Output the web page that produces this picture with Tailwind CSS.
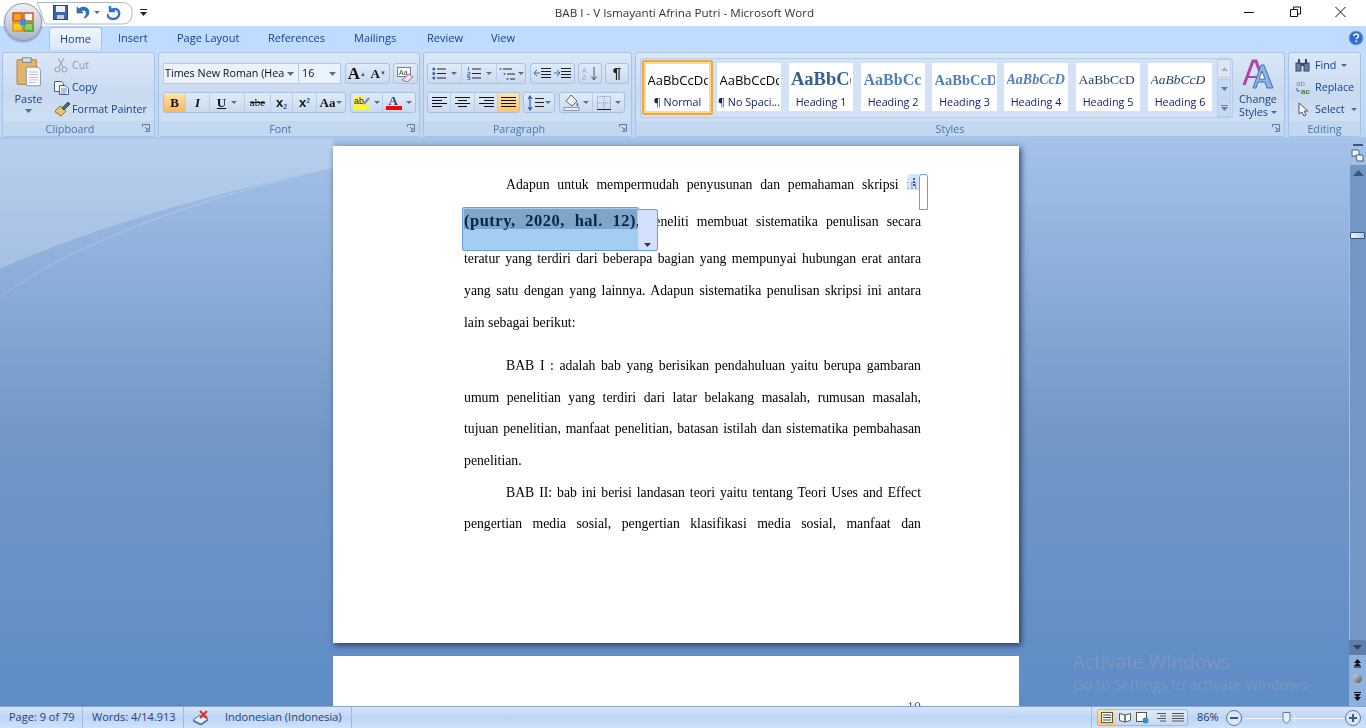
<!DOCTYPE html>
<html lang="id">
<head>
    <meta charset="UTF-8">
    <title>BAB I - V Ismayanti Afrina Putri - Microsoft Word</title>
    <script src="https://cdn.jsdelivr.net/npm/@tailwindcss/browser@4"></script>
</head>
<body class="m-0 overflow-hidden bg-white">
<div class="w-[1366px] h-[728px] flex flex-col overflow-hidden relative font-['Open_Sans','Noto_Sans',sans-serif] text-[10.750px] text-[#15428b]">

    <!-- title bar -->
    <div class="h-[26px] shrink-0 bg-white relative flex items-center justify-center">
        <span class="text-[11.650px] text-[#333] ml-[3px]">BAB I - V Ismayanti Afrina Putri - Microsoft Word</span>
        <div class="absolute right-0 top-0 h-[26px] flex items-center">
            <svg width="138" height="26" viewBox="0 0 138 26" fill="none" stroke="#111" stroke-width="1">
                <path d="M16 12.500h10"/>
                <path d="M62.500 9.500h7v7h-7zM65.500 9.500v-2.500h7v7h-3"/>
                <path d="M107.500 7l10 10M117.500 7l-10 10"/>
            </svg>
        </div>
    </div>

    <!-- tabs -->
    <div class="h-[24px] shrink-0 bg-[#bfdbff] flex items-end pl-[49px] relative text-[11px]">
        <div class="w-[53px] h-[23px] bg-gradient-to-b from-[#f0f6fe] to-[#dae7f8] border border-b-0 border-[#a4c1e6] rounded-t-[3px] flex items-center justify-center">Home</div>
        <div class="flex h-[23px] items-center">
            <span class="ml-[16px] w-[30px]">Insert</span>
            <span class="ml-[29px] w-[63px] whitespace-nowrap">Page Layout</span>
            <span class="ml-[28px] w-[57px]">References</span>
            <span class="ml-[29px] w-[44px]">Mailings</span>
            <span class="ml-[29px] w-[37px]">Review</span>
            <span class="ml-[27px] w-[25px]">View</span>
        </div>
        <svg class="absolute right-[2px] top-[4px]" width="16" height="16" viewBox="0 0 16 16"><circle cx="8" cy="8" r="7" fill="#2a6fd0" stroke="#7fa8e0"/><path d="M5.800 6.200c.2-1.500 1.200-2.200 2.400-2.200 1.300 0 2.300.8 2.300 2 0 1.700-2.200 1.700-2.200 3.300" fill="none" stroke="#fff" stroke-width="1.500"/><rect x="7.500" y="10.500" width="1.600" height="1.600" fill="#fff"/></svg>
    </div>

    <!-- ribbon -->
    <div class="h-[89px] shrink-0 bg-gradient-to-b from-[#c6dcf8] to-[#bdd6f4] border-b-2 border-[#a9c6e8] flex pl-[2px] pt-[2px] gap-[3px] relative">

        <!-- clipboard -->
        <div class="w-[153px] h-[85px] rounded-[3px] border border-[#a7c3e2] flex flex-col bg-gradient-to-b from-[#dbe7f7] via-[#c9daf0] to-[#d3e2f5]">
            <div class="h-[68px] flex relative">
                <div class="w-[51px] flex flex-col items-center pt-[4px]">
                    <svg width="27" height="30" viewBox="0 0 30 34"><rect x="2" y="3" width="22" height="28" rx="1" fill="#e3b56a" stroke="#a87b34"/><rect x="8" y="1" width="10" height="5" fill="#d8dde4" stroke="#6d7a8c"/><path d="M12.500 11.500h13l3 3v18h-16z" fill="#fff" stroke="#7c8ba0"/><path d="M15 17h11M15 20h11M15 23h11M15 26h11M15 29h8" stroke="#a9b4c4"/></svg>
                    <span class="mt-[5px] leading-[13px] text-[11px]">Paste</span>
                    <svg class="mt-[4px]" width="7" height="4"><path d="M0 0h7L3.500 4z" fill="#4b6a9a"/></svg>
                </div>
                <div class="flex flex-col pt-[1px]">
                    <div class="h-[22px] flex items-center gap-[4px]">
                        <svg width="14" height="16" viewBox="0 0 14 16" fill="none" stroke="#9a9ea6"><path d="M4 1l5 9M10 1L5 10"/><circle cx="3.500" cy="12.500" r="2.500"/><circle cx="10.500" cy="12.500" r="2.500"/></svg>
                        <span class="text-[#8d99ac]">Cut</span>
                    </div>
                    <div class="h-[22px] flex items-center gap-[3px]">
                        <svg width="15" height="15" viewBox="0 0 15 15"><path d="M.500 1.500h7l2 2v8h-9z" fill="#f4f7fb" stroke="#3f5f93"/><path d="M5.500 5.500h6l3 3v6h-9z" fill="#fff" stroke="#3f5f93"/><path d="M7 9h6M7 11h6M7 13h5" stroke="#6c86ad"/></svg>
                        <span>Copy</span>
                    </div>
                    <div class="h-[22px] flex items-center gap-[1px]">
                        <svg width="17" height="16" viewBox="0 0 17 16"><path d="M1 10l5-5 6 5-5 5-2-1-1-2-2 0z" fill="#e5c56d" stroke="#99782f"/><path d="M8 7l6-6 2 2-6 6z" fill="#56647f" stroke="#3c4a63"/></svg>
                        <span class="whitespace-nowrap">Format Painter</span>
                    </div>
                </div>
            </div>
            <div class="h-[15px] bg-[#c2d8f1] rounded-b-[3px] relative text-center leading-[16px] text-[#5272ab] pr-[17px]">Clipboard
                <svg class="absolute right-[4px] top-[3px]" width="8" height="8" viewBox="0 0 8 8" fill="none" stroke="#5d7ca8"><path d="M.500 3V.500h7v7H3"/><path d="M3 3l3 3M4 6h2V4"/></svg>
            </div>
        </div>

        <!-- font -->
        <div class="w-[262px] h-[85px] rounded-[3px] border border-[#a7c3e2] flex flex-col bg-gradient-to-b from-[#dbe7f7] via-[#c9daf0] to-[#d3e2f5]">
            <div class="h-[68px] pl-[4px] pt-[10px] flex flex-col gap-[8px]">
                <div class="flex h-[21px] items-center text-[#111]">
                    <div class="w-[136px] h-[21px] bg-[#eaf2fc] border border-[#b4cbe6] flex items-center justify-between pl-[1px] pr-[4px] whitespace-nowrap overflow-hidden text-[10.750px]">Times New Roman (Hea<svg class="shrink-0" width="7" height="4"><path d="M0 0h7L3.500 4z" fill="#56708f"/></svg></div>
                    <div class="w-[42px] h-[21px] bg-[#eaf2fc] border border-l-0 border-[#b4cbe6] flex items-center justify-between pl-[3px] pr-[4px]">16<svg width="7" height="4"><path d="M0 0h7L3.500 4z" fill="#56708f"/></svg></div>
                    <div class="ml-[4px] w-[45px] h-[21px] border border-[#a9c2e0] rounded-[3px] bg-gradient-to-b from-[#e1ebf8] to-[#c8daf0] flex items-center font-['Liberation_Serif'] font-bold">
                        <span class="w-[22px] text-center text-[17px] leading-none">A<sup class="text-[6px] text-[#2c5aa0]">▲</sup></span>
                        <span class="w-[22px] text-center text-[13px] leading-none">A<sup class="text-[6px] text-[#2c5aa0]">▼</sup></span>
                    </div>
                    <div class="ml-[3px] w-[25px] h-[21px] border border-[#a9c2e0] rounded-[3px] bg-gradient-to-b from-[#e1ebf8] to-[#c8daf0] flex items-center justify-center">
                        <svg width="19" height="16" viewBox="0 0 19 16"><rect x="1.500" y="1.500" width="13" height="9" fill="#fff" stroke="#6d7f99"/><path d="M6 14l7-6 4 3-6 5z" fill="#f4e0e4" stroke="#8a7f90"/><text x="3" y="9" font-size="7" font-family="Liberation Sans" fill="#333">Aa</text></svg>
                    </div>
                </div>
                <div class="flex h-[21px] items-center text-[#111]">
                    <div class="w-[183px] h-[21px] border border-[#a9c2e0] rounded-[3px] bg-gradient-to-b from-[#e1ebf8] to-[#c8daf0] flex items-center font-['Liberation_Serif'] divide-x divide-[#b7cde8]">
                        <span class="w-[22px] h-full bg-gradient-to-b from-[#fde6a8] to-[#fbb45e] flex items-center justify-center font-bold text-[13px] rounded-l-[2px]">B</span>
                        <span class="w-[24px] text-center italic font-bold text-[13px]">I</span>
                        <span class="w-[35px] flex items-center justify-center gap-[5px] font-bold text-[13px] underline">U<svg width="6" height="3"><path d="M0 0h6L3 3z" fill="#56708f"/></svg></span>
                        <span class="w-[26px] text-center text-[11px] line-through">abe</span>
                        <span class="w-[22px] text-center font-bold text-[13px] font-['Liberation_Sans']">x<sub class="text-[7px] text-[#2c5aa0]">2</sub></span>
                        <span class="w-[24px] text-center font-bold text-[13px] font-['Liberation_Sans']">x<sup class="text-[7px] text-[#2c5aa0]">2</sup></span>
                        <span class="flex-1 flex items-center justify-center gap-[1px] text-[13px] font-bold">Aa<svg width="6" height="3"><path d="M0 0h6L3 3z" fill="#56708f"/></svg></span>
                    </div>
                    <div class="ml-[4px] w-[66px] h-[21px] border border-[#a9c2e0] rounded-[3px] bg-gradient-to-b from-[#e1ebf8] to-[#c8daf0] flex items-center">
                        <div class="w-[32px] flex items-center justify-center gap-[3px] border-r border-[#b7cde8] h-full">
                            <svg width="18" height="17" viewBox="0 0 18 17"><rect x="1" y="2" width="10" height="9" fill="#fff27a"/><text x="1" y="10" font-size="9" font-family="Liberation Sans" fill="#111">ab</text><path d="M11 10l5-6" stroke="#7c8ba0" stroke-width="2"/><rect x="1" y="12" width="16" height="4" fill="#ffff00"/></svg>
                            <svg width="6" height="3"><path d="M0 0h6L3 3z" fill="#56708f"/></svg>
                        </div>
                        <div class="flex-1 flex items-center justify-center gap-[3px]">
                            <svg width="17" height="17" viewBox="0 0 17 17"><text x="2.500" y="11" font-size="13" font-weight="bold" font-family="Liberation Serif" fill="#22407c">A</text><rect x="0" y="12" width="16" height="4" fill="#f00"/></svg>
                            <svg width="6" height="3"><path d="M0 0h6L3 3z" fill="#56708f"/></svg>
                        </div>
                    </div>
                </div>
            </div>
            <div class="h-[15px] bg-[#c2d8f1] rounded-b-[3px] relative text-center leading-[16px] text-[#5272ab] pr-[17px]">Font
                <svg class="absolute right-[4px] top-[3px]" width="8" height="8" viewBox="0 0 8 8" fill="none" stroke="#5d7ca8"><path d="M.500 3V.500h7v7H3"/><path d="M3 3l3 3M4 6h2V4"/></svg>
            </div>
        </div>

        <!-- paragraph -->
        <div class="w-[209px] h-[85px] rounded-[3px] border border-[#a7c3e2] flex flex-col bg-gradient-to-b from-[#dbe7f7] via-[#c9daf0] to-[#d3e2f5]">
            <div class="h-[68px] pl-[3px] pt-[10px] flex flex-col gap-[8px]">
                <div class="flex h-[21px] items-center">
                    <div class="w-[99px] h-[21px] border border-[#a9c2e0] rounded-[3px] bg-gradient-to-b from-[#e1ebf8] to-[#c8daf0] flex items-center divide-x divide-[#b7cde8]">
                        <span class="w-[34px] h-full flex items-center justify-center gap-[4px]">
                            <svg width="15" height="13" viewBox="0 0 15 13"><path d="M5 2h9M5 6.500h9M5 11h9" stroke="#222"/><circle cx="1.800" cy="2" r="1.500" fill="#3a66a8"/><circle cx="1.800" cy="6.500" r="1.500" fill="#3a66a8"/><circle cx="1.800" cy="11" r="1.500" fill="#3a66a8"/></svg>
                            <svg width="6" height="3"><path d="M0 0h6L3 3z" fill="#56708f"/></svg>
                        </span>
                        <span class="w-[35px] h-full flex items-center justify-center gap-[4px]">
                            <svg width="15" height="13" viewBox="0 0 15 13"><path d="M5 2h9M5 6.500h9M5 11h9" stroke="#222"/><path d="M1.500 0v4M.500 5.500h2.500v2H.500v2h2.500M.500 10.500h2.500v2h-2.500" fill="none" stroke="#3a66a8" stroke-width=".8"/></svg>
                            <svg width="6" height="3"><path d="M0 0h6L3 3z" fill="#56708f"/></svg>
                        </span>
                        <span class="flex-1 h-full flex items-center justify-center gap-[2px]">
                            <svg width="17" height="14" viewBox="0 0 17 14"><path d="M4 2h9M8 7h8M11 12h5" stroke="#222"/><circle cx="1.500" cy="2" r="1" fill="#3a66a8"/><circle cx="5.500" cy="7" r="1" fill="#3a66a8"/><circle cx="8.500" cy="12" r="1" fill="#3a66a8"/></svg>
                            <svg width="6" height="3"><path d="M0 0h6L3 3z" fill="#56708f"/></svg>
                        </span>
                    </div>
                    <div class="ml-[4px] w-[45px] h-[21px] border border-[#a9c2e0] rounded-[3px] bg-gradient-to-b from-[#e1ebf8] to-[#c8daf0] flex items-center justify-around px-[1px]">
                        <svg width="17" height="13" viewBox="0 0 17 13"><path d="M7 1.500h10M7 4.500h10M7 7.500h10M7 10.500h10" stroke="#222" stroke-width="1.200"/><path d="M0 6h6M3 3L0 6l3 3" fill="none" stroke="#3a66a8"/></svg>
                        <svg width="17" height="13" viewBox="0 0 17 13"><path d="M7 1.500h10M7 4.500h10M7 7.500h10M7 10.500h10" stroke="#222" stroke-width="1.200"/><path d="M0 6h6M3 3l3 3-3 3" fill="none" stroke="#3a66a8"/></svg>
                    </div>
                    <div class="ml-[3px] w-[24px] h-[21px] border border-[#a9c2e0] rounded-[3px] bg-gradient-to-b from-[#e1ebf8] to-[#c8daf0] flex items-center justify-center">
                        <svg width="17" height="15" viewBox="0 0 17 15"><text x="0" y="7" font-size="7" font-family="Liberation Sans" fill="#9aa8bd">A</text><text x="0" y="14" font-size="7" font-family="Liberation Sans" fill="#9aa8bd">Z</text><path d="M12 1v12M9.500 10.500L12 14l2.500-3.500" fill="none" stroke="#47556b"/></svg>
                    </div>
                    <div class="ml-[3px] w-[24px] h-[21px] border border-[#a9c2e0] rounded-[3px] bg-gradient-to-b from-[#e1ebf8] to-[#c8daf0] flex items-center justify-center font-bold text-[15px] text-[#222] font-['Liberation_Sans']">¶</div>
                </div>
                <div class="flex h-[21px] items-center">
                    <div class="w-[93px] h-[21px] border border-[#a9c2e0] rounded-[3px] bg-gradient-to-b from-[#e1ebf8] to-[#c8daf0] flex items-center divide-x divide-[#b7cde8]">
                        <span class="w-[23px] h-full flex items-center justify-center"><svg width="15" height="13" viewBox="0 0 15 13" stroke="#111"><path d="M0 1.500h15M0 4.500h10M0 7.500h15M0 10.500h10"/></svg></span>
                        <span class="w-[24px] h-full flex items-center justify-center"><svg width="15" height="13" viewBox="0 0 15 13" stroke="#111"><path d="M0 1.500h15M3 4.500h9M0 7.500h15M3 10.500h9"/></svg></span>
                        <span class="w-[23px] h-full flex items-center justify-center"><svg width="15" height="13" viewBox="0 0 15 13" stroke="#111"><path d="M0 1.500h15M5 4.500h10M0 7.500h15M5 10.500h10"/></svg></span>
                        <span class="flex-1 h-full bg-gradient-to-b from-[#fde6a8] to-[#fbc56e] flex items-center justify-center rounded-r-[2px]"><svg width="15" height="13" viewBox="0 0 15 13" stroke="#111"><path d="M0 1.500h15M0 4.500h15M0 7.500h15M0 10.500h15"/></svg></span>
                    </div>
                    <div class="ml-[3px] w-[32px] h-[21px] border border-[#a9c2e0] rounded-[3px] bg-gradient-to-b from-[#e1ebf8] to-[#c8daf0] flex items-center justify-center gap-[1px]">
                        <svg width="17" height="16" viewBox="0 0 17 16"><path d="M3 1v14M1 4l2-3 2 3M1 12l2 3 2-3" fill="none" stroke="#2f62ad" stroke-width="1.200"/><path d="M8 3.500h9M8 7.500h9M8 11.500h9" stroke="#222"/></svg>
                        <svg width="6" height="3"><path d="M0 0h6L3 3z" fill="#56708f"/></svg>
                    </div>
                    <div class="ml-[4px] w-[66px] h-[21px] border border-[#a9c2e0] rounded-[3px] bg-gradient-to-b from-[#e1ebf8] to-[#c8daf0] flex items-center divide-x divide-[#b7cde8]">
                        <span class="w-[33px] h-full flex items-center justify-center gap-[3px]">
                            <svg width="17" height="17" viewBox="0 0 17 17"><path d="M8 1l6 6-5 5-6-5z" fill="#f5f7fa" stroke="#52627c"/><path d="M14 8c1 2 2 3 1 4s-2-1-1-4z" fill="#3a66a8"/><rect x="1" y="13.500" width="15" height="3" fill="#e8eef6" stroke="#8c99ab"/></svg>
                            <svg width="6" height="3"><path d="M0 0h6L3 3z" fill="#56708f"/></svg>
                        </span>
                        <span class="flex-1 h-full flex items-center justify-center gap-[4px]">
                            <svg width="14" height="14" viewBox="0 0 14 14" stroke="#8a96a8" stroke-dasharray="1 1" fill="none"><path d="M.500.500h13v13H.500zM7 0v14M0 7h14"/><path d="M0 13.500h14" stroke="#222" stroke-dasharray="none"/></svg>
                            <svg width="6" height="3"><path d="M0 0h6L3 3z" fill="#56708f"/></svg>
                        </span>
                    </div>
                </div>
            </div>
            <div class="h-[15px] bg-[#c2d8f1] rounded-b-[3px] relative text-center leading-[16px] text-[#5272ab] pr-[17px]">Paragraph
                <svg class="absolute right-[4px] top-[3px]" width="8" height="8" viewBox="0 0 8 8" fill="none" stroke="#5d7ca8"><path d="M.500 3V.500h7v7H3"/><path d="M3 3l3 3M4 6h2V4"/></svg>
            </div>
        </div>

        <!-- styles -->
        <div class="w-[650px] h-[85px] rounded-[3px] border border-[#a7c3e2] flex flex-col bg-gradient-to-b from-[#dbe7f7] via-[#c9daf0] to-[#d3e2f5]">
            <div class="h-[68px] flex pl-[4px] pt-[5px]">
                <div class="w-[593px] h-[60px] border border-[#b5cde9] rounded-[2px] bg-[#d3e2f6] flex">
                    <div class="flex items-start pl-[1px] pt-[1px] text-[#111]">
                        <div class="w-[71px] h-[55px] border-2 border-[#e9a948] rounded-[2px] bg-white flex flex-col items-center overflow-hidden shadow-[inset_0_0_0_2px_#fdd98a]">
                            <span class="mt-[8px] h-[20px] w-[60px] overflow-hidden whitespace-nowrap text-[13px] leading-[20px] text-black">AaBbCcDd</span>
                            <span class="mt-[4px] text-[#15206b]">¶ Normal</span>
                        </div>
                        <div class="ml-[4px] mt-[3px] w-[64px] h-[48px] bg-white flex flex-col items-center overflow-hidden">
                            <span class="mt-[7px] h-[20px] w-[59px] overflow-hidden whitespace-nowrap text-[13px] leading-[20px] text-black">AaBbCcDd</span>
                            <span class="mt-[4px] text-[#15206b] whitespace-nowrap">¶ No Spaci...</span>
                        </div>
                        <div class="ml-[8px] mt-[3px] w-[64px] h-[48px] bg-white flex flex-col items-center overflow-hidden">
                            <span class="mt-[5px] h-[22px] w-[60px] overflow-hidden whitespace-nowrap text-[18.500px] leading-[22px] font-bold text-[#365f91] font-['Liberation_Serif']">AaBbCc</span>
                            <span class="mt-[4px] text-[#15206b]">Heading 1</span>
                        </div>
                        <div class="ml-[8px] mt-[3px] w-[64px] h-[48px] bg-white flex flex-col items-center overflow-hidden">
                            <span class="mt-[6px] h-[21px] w-[59px] overflow-hidden whitespace-nowrap text-[16px] leading-[21px] font-bold text-[#4f81bd] font-['Liberation_Serif']">AaBbCc</span>
                            <span class="mt-[4px] text-[#15206b]">Heading 2</span>
                        </div>
                        <div class="ml-[7px] mt-[3px] w-[65px] h-[48px] bg-white flex flex-col items-center overflow-hidden">
                            <span class="mt-[7px] h-[20px] w-[60px] overflow-hidden whitespace-nowrap text-[14.500px] leading-[20px] font-bold text-[#4f81bd] font-['Liberation_Serif']">AaBbCcD</span>
                            <span class="mt-[4px] text-[#15206b]">Heading 3</span>
                        </div>
                        <div class="ml-[7px] mt-[3px] w-[64px] h-[48px] bg-white flex flex-col items-center overflow-hidden">
                            <span class="mt-[7px] h-[20px] w-[59px] overflow-hidden whitespace-nowrap text-[14px] leading-[20px] font-bold italic text-[#4f81bd] font-['Liberation_Serif']">AaBbCcD</span>
                            <span class="mt-[4px] text-[#15206b]">Heading 4</span>
                        </div>
                        <div class="ml-[8px] mt-[3px] w-[64px] h-[48px] bg-white flex flex-col items-center overflow-hidden">
                            <span class="mt-[7px] h-[20px] w-[59px] overflow-hidden whitespace-nowrap text-[13.500px] leading-[20px] text-[#243f60] font-['Liberation_Serif']">AaBbCcD</span>
                            <span class="mt-[4px] text-[#15206b]">Heading 5</span>
                        </div>
                        <div class="ml-[8px] mt-[3px] w-[64px] h-[48px] bg-white flex flex-col items-center overflow-hidden">
                            <span class="mt-[7px] h-[20px] w-[59px] overflow-hidden whitespace-nowrap text-[13.500px] leading-[20px] italic text-[#243f60] font-['Liberation_Serif']">AaBbCcD</span>
                            <span class="mt-[4px] text-[#15206b]">Heading 6</span>
                        </div>
                    </div>
                    <div class="ml-[5px] w-[14px] flex flex-col gap-[1px]">
                        <div class="h-[19px] bg-[#dde7f4] border border-[#bccfe6] rounded-t-[2px] flex items-center justify-center"><svg width="7" height="4"><path d="M0 4h7L3.500 0z" fill="#a5b3c6"/></svg></div>
                        <div class="h-[19px] bg-[#c8daf2] border border-[#b5cde9] flex items-center justify-center"><svg width="7" height="4"><path d="M0 0h7L3.500 4z" fill="#5b7eae"/></svg></div>
                        <div class="h-[18px] bg-[#c8daf2] border border-[#b5cde9] rounded-b-[2px] flex flex-col items-center justify-center gap-[1px]"><span class="w-[7px] h-[1px] bg-[#5b7eae]"></span><svg width="7" height="4"><path d="M0 0h7L3.500 4z" fill="#5b7eae"/></svg></div>
                    </div>
                </div>
                <div class="w-[50px] flex flex-col items-center">
                    <svg class="mt-[1px]" width="32" height="31" viewBox="0 0 32 31"><path d="M2 26L11 2h3l5 14" fill="none" stroke="#b044a8" stroke-width="3"/><path d="M6 18h10" stroke="#b044a8" stroke-width="2"/><path d="M11 29L19 6h3l9 23h-6l-2-6h-7l-2 6z" fill="#8fb2e4" stroke="#3f6fb5"/><path d="M17 20h6l-3-8z" fill="#fff" stroke="#3f6fb5"/></svg>
                    <span class="mt-[3px] leading-[13px]">Change</span>
                    <span class="leading-[13px] flex items-center gap-[3px]">Styles<svg width="6" height="3"><path d="M0 0h6L3 3z" fill="#4b6a9a"/></svg></span>
                </div>
            </div>
            <div class="h-[15px] bg-[#c2d8f1] rounded-b-[3px] relative text-center leading-[16px] text-[#5272ab] pr-[20px]">Styles
                <svg class="absolute right-[4px] top-[3px]" width="8" height="8" viewBox="0 0 8 8" fill="none" stroke="#5d7ca8"><path d="M.500 3V.500h7v7H3"/><path d="M3 3l3 3M4 6h2V4"/></svg>
            </div>
        </div>

        <!-- editing -->
        <div class="w-[73px] h-[85px] rounded-[3px] border border-[#a7c3e2] flex flex-col bg-gradient-to-b from-[#dbe7f7] via-[#c9daf0] to-[#d3e2f5]">
            <div class="h-[68px] pl-[6px] pt-[1px] flex flex-col">
                <div class="h-[22px] flex items-center gap-[5px]">
                    <svg width="15" height="14" viewBox="0 0 15 14"><rect x="1" y="5" width="5" height="8" fill="#6a7f9f" stroke="#34486b"/><rect x="9" y="5" width="5" height="8" fill="#6a7f9f" stroke="#34486b"/><rect x="3" y="1" width="2" height="5" fill="#34486b"/><rect x="10" y="1" width="2" height="5" fill="#34486b"/><rect x="6" y="5" width="3" height="3" fill="#34486b"/></svg>
                    <span>Find</span><svg width="6" height="3"><path d="M0 0h6L3 3z" fill="#4b6a9a"/></svg>
                </div>
                <div class="h-[22px] flex items-center gap-[4px]">
                    <svg width="16" height="16" viewBox="0 0 16 16"><text x="1" y="7" font-size="8" font-family="Liberation Sans" fill="#8a8f96">ab</text><text x="6" y="15" font-size="8" font-weight="bold" font-family="Liberation Sans" fill="#2f8a3c">ac</text><path d="M2 9v3h3" fill="none" stroke="#3a66a8"/></svg>
                    <span>Replace</span>
                </div>
                <div class="h-[22px] flex items-center gap-[6px] pl-[3px]">
                    <svg width="11" height="15" viewBox="0 0 11 15"><path d="M1 1v11l3-2 2 4 2-1-2-4h4z" fill="#fff" stroke="#45566f"/></svg>
                    <span>Select</span><svg width="6" height="3"><path d="M0 0h6L3 3z" fill="#4b6a9a"/></svg>
                </div>
            </div>
            <div class="h-[15px] bg-[#c2d8f1] rounded-b-[3px] text-center leading-[16px] text-[#5272ab]">Editing</div>
        </div>
    </div>

    <!-- document area -->
    <div class="flex-1 flex min-h-0 bg-gradient-to-b from-[#a4c2ea] via-[#7297c6] via-52% to-[#5e8cc7] relative overflow-hidden">
        <!-- swoosh behind the pages -->
        <svg class="absolute left-0 top-0" width="333" height="160" viewBox="0 0 333 160"><path d="M0 0h333v28C210 56 100 85 0 130z" fill="#fff" fill-opacity=".22"/><path d="M0 158C80 100 200 60 333 28" fill="none" stroke="#fff" stroke-opacity=".22"/></svg>

        <div class="flex-1 flex flex-col items-center pt-[7px] gap-[13px] relative">
            <div class="w-[686px] h-[497px] shrink-0 bg-white shadow-[2px_2px_6px_rgba(20,35,70,.8)] mr-[-3px] pl-[131px] pr-[98px] font-['Liberation_Serif'] text-[13.760px] text-black relative">
                <div class="h-[43px] pt-[30px] leading-[18px]"><p class="indent-[42px] text-justify [text-align-last:justify]">Adapun untuk mempermudah penyusunan dan pemahaman skripsi ini</p></div>
                <div class="h-[47px] pt-[23px] leading-[18px]"><p class="text-justify [text-align-last:justify]"><span class="inline-block w-[172px] font-bold text-[16.500px] tracking-[.5px] leading-[18px] text-[#0e3a63] [text-align-last:justify]">(putry, 2020, hal. 12)</span>, peneliti membuat sistematika penulisan secara</p></div>
                <div class="h-[32px] pt-[14px] leading-[18px]"><p class="text-justify [text-align-last:justify]">teratur yang terdiri dari beberapa bagian yang mempunyai hubungan erat antara</p></div>
                <div class="h-[32px] pt-[14px] leading-[18px]"><p class="text-justify [text-align-last:justify]">yang satu dengan yang lainnya. Adapun sistematika penulisan skripsi ini antara</p></div>
                <div class="h-[32px] pt-[14px] leading-[18px]"><p>lain sebagai berikut:</p></div>
                <div class="h-[43px] pt-[25px] leading-[18px]"><p class="indent-[42px] text-justify [text-align-last:justify]">BAB I : adalah bab yang berisikan pendahuluan yaitu berupa gambaran</p></div>
                <div class="h-[32px] pt-[14px] leading-[18px]"><p class="text-justify [text-align-last:justify]">umum penelitian yang terdiri dari latar belakang masalah, rumusan masalah,</p></div>
                <div class="h-[31px] pt-[13px] leading-[18px]"><p class="text-justify [text-align-last:justify]">tujuan penelitian, manfaat penelitian, batasan istilah dan sistematika pembahasan</p></div>
                <div class="h-[32px] pt-[14px] leading-[18px]"><p>penelitian.</p></div>
                <div class="h-[32px] pt-[14px] leading-[18px]"><p class="indent-[42px] text-justify [text-align-last:justify]">BAB II: bab ini berisi landasan teori yaitu tentang Teori Uses and Effect</p></div>
                <div class="h-[31px] pt-[13px] leading-[18px]"><p class="text-justify [text-align-last:justify]">pengertian media sosial, pengertian klasifikasi media sosial, manfaat dan</p></div>

                <!-- content control over the citation -->
                <div class="absolute left-[129px] top-[61px] w-[177px] h-[44px] border border-[#6b9ae6] rounded-[2px] bg-[#a3cdf1] mix-blend-multiply">
                    <div class="h-[20px] mt-[1px] ml-[1px] mr-[1px] bg-[#7fa6c8]"></div>
                </div>
                <div class="absolute left-[305px] top-[63px] w-[20px] h-[42px] border border-l-0 border-[#6b9ae6] rounded-r-[3px] bg-[#d3e0fd] flex items-end justify-center pb-[3px]"><svg width="7" height="4"><path d="M0 0h7L3.500 4z" fill="#1d3a78"/></svg></div>
                <div class="absolute left-[575px] top-[28px] w-[11px] h-[16px] bg-[#c8d9fb]/70 border border-[#d6e2fb] flex flex-col items-center justify-center gap-[1px] rounded-l-[2px]"><span class="w-[2px] h-[2px] bg-[#44628f]"></span><span class="w-[2px] h-[2px] bg-[#44628f]"></span><span class="w-[2px] h-[2px] bg-[#44628f]"></span></div>
                <div class="absolute left-[586px] top-[28px] w-[9px] h-[36px] bg-white border border-[#6b9ae6] rounded-t-[3px]"></div>
            </div>
            <div class="w-[686px] h-[100px] shrink-0 bg-white mr-[-3px] font-['Liberation_Serif'] text-[13.760px] text-[#555] relative">
                <span class="absolute left-[574px] top-[42px]">10</span>
            </div>
        </div>

        <!-- vertical scrollbar -->
        <div class="w-[17px] shrink-0 flex flex-col items-center relative">
            <div class="h-[7px] w-full flex items-end justify-center"><span class="w-[10px] h-[2px] bg-[#3e5580]"></span></div>
            <svg class="mt-[3px]" width="13" height="13" viewBox="0 0 13 13"><path d="M1 1h6l1 1v5H1z" fill="#f2f5fb" stroke="#4a5d80"/><path d="M5 6h6l1 1v5H6z" fill="#f2f5fb" stroke="#4a5d80"/></svg>
            <div class="mt-[3px] flex-1 w-full bg-[#7397c4] border-l border-[#9fbde5] relative">
                <svg class="mx-auto mt-[5px]" width="11" height="6"><path d="M0 6h11L5.500 0z" fill="#3e5580"/></svg>
                <div class="absolute left-0 top-[67px] w-[15px] h-[7px] rounded-[1px] border border-[#3e5580] bg-gradient-to-r from-[#f2f5fb] to-[#b9c8de]"></div>
            </div>
            <div class="absolute bottom-0 left-0 right-0 h-[66px] bg-[#8eb1e0] flex flex-col items-center">
                <div class="h-[15px] w-full bg-[#5f7dab] flex items-center justify-center"><svg width="9" height="5"><path d="M0 0h9L4.500 5z" fill="#2d4067"/></svg></div>
                <svg class="mt-[4px]" width="9" height="9" viewBox="0 0 9 9"><path d="M4.500 0L8 4H1zM4.500 3.500L8 7H1z" fill="#111"/><path d="M1 8h7" stroke="#111"/></svg>
                <span class="mt-[6px] w-[9px] h-[9px] rounded-full bg-gradient-to-br from-[#ddd] to-[#555]"></span>
                <svg class="mt-[9px]" width="9" height="9" viewBox="0 0 9 9"><path d="M1 .500h7" stroke="#111"/><path d="M4.500 9L8 5H1zM4.500 5.500L8 2H1z" fill="#111"/></svg>
            </div>
        </div>

        <!-- activation watermark -->
        <div class="absolute left-[1073px] top-[510px] text-[#7b97bd] font-['Open_Sans'] pointer-events-none">
            <div class="text-[19.200px] leading-[26px]">Activate Windows</div>
            <div class="text-[14.500px] leading-[20px]">Go to Settings to activate Windows.</div>
        </div>
    </div>

    <!-- status bar -->
    <div class="h-[22px] shrink-0 border-t border-[#83a6d6] bg-gradient-to-b from-[#d6e6fa] via-[#bcd5f5] to-[#cfe2fa] flex items-center text-[#2a4078] relative text-[11px]">
        <span class="w-[83px] pl-[9px] whitespace-nowrap border-r border-[#9dbbe0] h-full flex items-center">Page: 9 of 79</span>
        <span class="w-[101px] pl-[9px] whitespace-nowrap border-r border-[#9dbbe0] h-full flex items-center">Words: 4/14.913</span>
        <span class="w-[34px] flex justify-center"><svg width="18" height="15" viewBox="0 0 18 15"><path d="M1 10l7-5 8 4-7 5z" fill="#e8eef8" stroke="#4d6da3"/><path d="M1 11l8 4 7-5" fill="none" stroke="#2f5aa0"/><path d="M8 1l7 7M15 1L8 8" stroke="#d8322a" stroke-width="2"/></svg></span>
        <span class="w-[134px] pl-[7px] whitespace-nowrap border-r border-[#9dbbe0] h-full flex items-center">Indonesian (Indonesia)</span>
        <div class="absolute right-0 top-0 h-full w-[275px] border-l border-[#9dbbe0] flex items-center pl-[5px]">
            <div class="w-[91px] h-[17px] border border-[#9db8dc] rounded-[2px] flex items-center bg-gradient-to-b from-[#dfeafa] to-[#c5d9f4]">
                <span class="w-[18px] h-full bg-gradient-to-b from-[#fde6a8] to-[#fbc56e] flex items-center justify-center"><svg width="12" height="11" viewBox="0 0 12 11"><rect x=".500" y=".500" width="11" height="10" fill="#fff" stroke="#555"/><path d="M2 3h8M2 5.500h8M2 8h8" stroke="#444"/></svg></span>
                <span class="w-[18px] flex justify-center"><svg width="12" height="11" viewBox="0 0 12 11" fill="#fff" stroke="#555"><path d="M.500 1.500L6 3v7L.500 8.500zM11.500 1.500L6 3v7l5.500-1.500z"/></svg></span>
                <span class="w-[18px] flex justify-center"><svg width="13" height="12" viewBox="0 0 13 12"><rect x=".500" y=".500" width="10" height="9" fill="#fff" stroke="#555"/><circle cx="9.500" cy="8.500" r="3" fill="#3b8fc0"/></svg></span>
                <span class="w-[18px] flex justify-center"><svg width="12" height="11" viewBox="0 0 12 11" stroke="#555"><path d="M3 1.500h9M6 4h6M3 6.500h9M6 9h6" /></svg></span>
                <span class="w-[18px] flex justify-center"><svg width="12" height="11" viewBox="0 0 12 11" stroke="#555"><path d="M0 1.500h12M0 4h12M0 6.500h12M0 9h12"/></svg></span>
            </div>
            <span class="ml-[9px] w-[26px] text-[11px] text-[#1c3a70]">86%</span>
            <svg class="ml-[3px]" width="137" height="18" viewBox="0 0 137 18">
                <path d="M18 9.500h100" stroke="#eef4fc"/>
                <path d="M68.500 6v7" stroke="#eef4fc"/>
                <circle cx="8" cy="9" r="7.500" fill="#dbe6f5" stroke="#5f7ba6"/>
                <path d="M4 9h8" stroke="#3c5a8c" stroke-width="2"/>
                <path d="M57 3.500h7v8l-3.500 3-3.500-3z" fill="#e6eef9" stroke="#5f7ba6"/>
                <circle cx="127" cy="9" r="7.500" fill="#dbe6f5" stroke="#5f7ba6"/>
                <path d="M123 9h8M127 5v8" stroke="#3c5a8c" stroke-width="2"/>
            </svg>
        </div>
    </div>

    <!-- office button and quick access toolbar -->
    <svg class="absolute left-[37px] top-[2px]" width="98" height="23" viewBox="0 0 98 23" fill="none"><path d="M0 .500h85c8 0 10 5 10 10.500s-2 11-10 11H8C5 16 4 8 0 .500z" fill="#fff" stroke="#aeb7c4"/></svg>
    <div class="absolute left-[4px] top-[3px] w-[38px] h-[38px] rounded-full bg-gradient-to-b from-[#eef1f5] to-[#a9b6c8] border border-[#8d9bae] shadow-[0_1px_2px_rgba(40,60,90,.5)] flex items-center justify-center">
        <svg width="24" height="24" viewBox="0 0 24 24"><rect x="2" y="3" width="9" height="8" fill="#f6a21d" stroke="#d5531d" stroke-width="1.500"/><rect x="13" y="3" width="9" height="8" fill="#fff" stroke="#d5531d" stroke-width="1.500"/><rect x="2" y="13" width="9" height="8" fill="#f8cc1d" stroke="#e5931d" stroke-width="1.500"/><rect x="13" y="13" width="9" height="8" fill="#8fcf5c" stroke="#4d9c35" stroke-width="1.500"/><path d="M9 9h6v6H9z" fill="#3c8fd8"/></svg>
    </div>
    <div class="absolute left-[53px] top-[5px] flex items-center">
        <svg width="15" height="15" viewBox="0 0 15 15"><rect x=".500" y=".500" width="14" height="14" fill="#4063a8" stroke="#2d4477"/><rect x="3" y="1" width="9" height="6" fill="#eef2f8"/><rect x="4" y="10" width="7" height="4" fill="#c6cfdd"/></svg>
        <svg class="ml-[7px]" width="16" height="15" viewBox="0 0 16 15"><path d="M2 2v6h6L6 6c3-2 6 0 5 4l-2 3c5-1 6-6 4-9-2-2-6-3-9 0z" fill="#2f75c8" stroke="#20528f" stroke-width=".6"/></svg>
        <svg class="ml-[3px]" width="6" height="3"><path d="M0 0h6L3 3z" fill="#596c8c"/></svg>
        <svg class="ml-[7px]" width="15" height="15" viewBox="0 0 15 15"><path d="M3 1v5h5M3 6c2-3 8-3 9 1s-2 7-6 7-6-3-5-5" fill="none" stroke="#2f75c8" stroke-width="2.400"/></svg>
    </div>
    <svg class="absolute left-[140px] top-[9px]" width="7" height="8" viewBox="0 0 7 8"><path d="M0 .500h7" stroke="#222"/><path d="M0 3h7L3.500 7z" fill="#222"/></svg>
</div>
</body>
</html>
